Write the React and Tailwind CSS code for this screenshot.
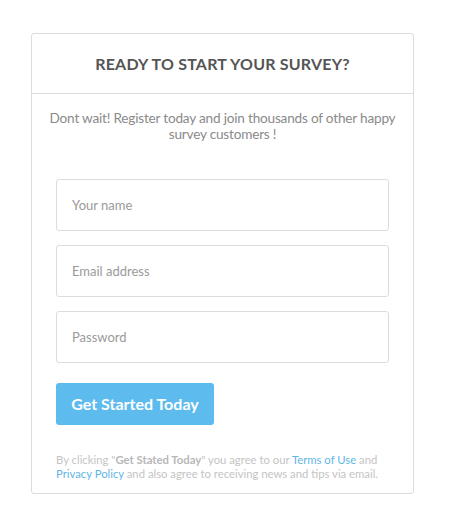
const Field = ({ placeholder, type = "text" }) => (
  <input
    type={type}
    placeholder={placeholder}
    className="h-[52px] w-full rounded-[3px] border border-[#dcdcdc] bg-white px-[15px] text-[13px] text-[#555] placeholder:text-[#9a9a9a] outline-none"
  />
);

export default function App() {
  return (
    <div className="min-h-screen bg-white pt-[33px] pl-[31px] font-['Lato',sans-serif]">
      <div className="w-[383px] h-[461px] rounded-[3px] border border-[#dcdcdc] bg-white">
        <header className="flex h-[60px] items-center justify-center border-b border-[#dcdcdc]">
          <h1 className="text-[16px] font-bold tracking-[0.2px] text-[#555]">READY TO START YOUR SURVEY?</h1>
        </header>

        <div className="px-[24px] pt-[16px]">
          <p className="-mx-[18px] text-center text-[13.6px] leading-[16px] tracking-[-0.2px] text-[#8a8a8a]">
            Dont wait! Register today and join thousands of other happy survey customers !
          </p>

          <form className="mt-[37px] flex flex-col gap-[14px]">
            <Field placeholder="Your name" />
            <Field placeholder="Email address" type="email" />
            <Field placeholder="Password" type="password" />
          </form>

          <button className="mt-[20px] h-[42px] w-[158px] rounded-[3px] bg-[#5dbbee] text-[16px] font-bold text-white">
            Get Started Today
          </button>

          <p className="mt-[28px] text-[11.3px] leading-[14px] text-[#c4c4c4]">
            By clicking "<span className="font-bold text-[#b8b8b8]">Get Stated Today</span>" you agree to our{" "}
            <a className="text-[#62b6e6]">Terms of Use</a> and{" "}
            <a className="text-[#62b6e6]">Privacy Policy</a> and also agree to receiving news and tips via email.
          </p>
        </div>
      </div>
    </div>
  );
}
